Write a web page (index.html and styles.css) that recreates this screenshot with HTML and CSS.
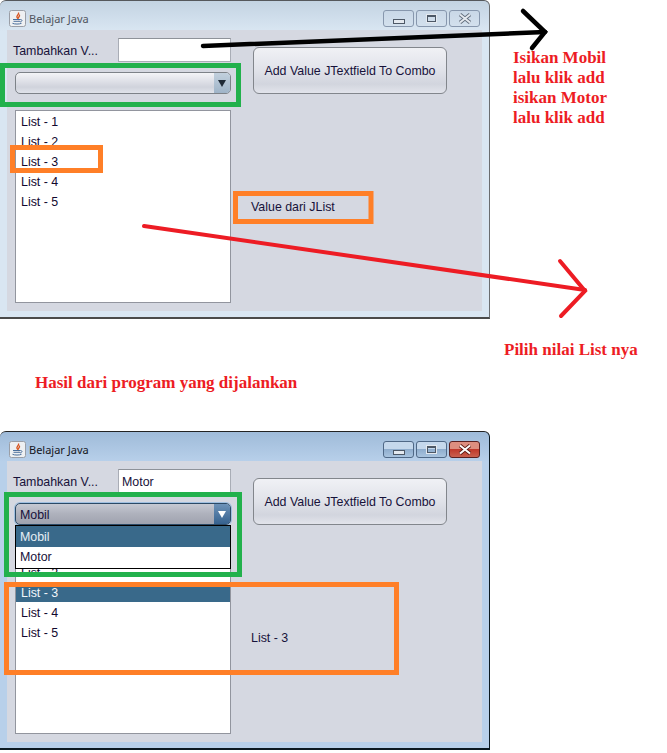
FILE: index.html
```html
<!DOCTYPE html>
<html lang="en">
<head>
    <meta charset="UTF-8">
    <meta name="viewport" content="width=device-width, initial-scale=1.0">
    <title>Belajar Java</title>
    <link rel="stylesheet" href="styles.css">
</head>
<body>
    <div id="canvas">
        <!-- first window: before running -->
        <div class="window inactive">
            <div class="title-bar">
                <svg class="java-icon" width="17" height="17" viewBox="0 0 17 17">
                    <rect x="0.5" y="0.5" width="16" height="16" rx="2" fill="#eef0f2" stroke="#9a9ea6"/>
                    <path d="M9.5 2.5c1 2-2.5 3-1.5 5 .3.6.8 1 1 1.2-.2-1.2 2.400-2.200 1.400-4.200" fill="none" stroke="#d8541e" stroke-width="1.300"/>
                    <path d="M4 9.500h7.500M4.500 11.300h6.500M3.500 13.300c2 1 7 1 9 0" fill="none" stroke="#4a6f9c" stroke-width="1"/>
                    <path d="M11.500 9.500c2 0 2 2-.5 2.500" fill="none" stroke="#4a6f9c" stroke-width="1"/>
                </svg>
                <span class="title-text">Belajar Java</span>
                <div class="win-buttons">
                    <div class="win-btn"><span class="glyph-min"></span></div>
                    <div class="win-btn"><span class="glyph-max"></span></div>
                    <div class="win-btn close">
                        <svg class="glyph-close" width="16" height="11" viewBox="0 0 16 11">
                            <path d="M3 1.500L13 9.500M13 1.500L3 9.500" stroke="#5f6b7a" stroke-width="3.600"/>
                            <path d="M3 1.500L13 9.500M13 1.500L3 9.500" stroke="#e4e9ef" stroke-width="2"/>
                        </svg>
                    </div>
                </div>
            </div>
            <div class="panel">
                <div class="left-col">
                    <div class="field-row">
                        <span class="field-label">Tambahkan V...</span>
                        <div class="text-field"></div>
                    </div>
                    <div class="combo">
                        <span class="combo-value"></span>
                        <span class="combo-arrow"><span class="arrow-down"></span></span>
                    </div>
                    <div class="list">
                        <div class="list-item">List - 1</div>
                        <div class="list-item">List - 2</div>
                        <div class="list-item">List - 3</div>
                        <div class="list-item">List - 4</div>
                        <div class="list-item">List - 5</div>
                    </div>
                </div>
                <div class="right-col">
                    <button class="add-btn">Add Value JTextfield To Combo</button>
                    <div class="value-label">Value dari JList</div>
                </div>
            </div>
        </div>

        <!-- second window: result -->
        <div class="window active">
            <div class="title-bar">
                <svg class="java-icon" width="17" height="17" viewBox="0 0 17 17">
                    <rect x="0.5" y="0.5" width="16" height="16" rx="2" fill="#eef0f2" stroke="#9a9ea6"/>
                    <path d="M9.5 2.5c1 2-2.5 3-1.5 5 .3.6.8 1 1 1.2-.2-1.2 2.400-2.200 1.400-4.200" fill="none" stroke="#d8541e" stroke-width="1.300"/>
                    <path d="M4 9.500h7.500M4.500 11.300h6.500M3.500 13.300c2 1 7 1 9 0" fill="none" stroke="#4a6f9c" stroke-width="1"/>
                    <path d="M11.500 9.500c2 0 2 2-.5 2.500" fill="none" stroke="#4a6f9c" stroke-width="1"/>
                </svg>
                <span class="title-text">Belajar Java</span>
                <div class="win-buttons">
                    <div class="win-btn"><span class="glyph-min"></span></div>
                    <div class="win-btn"><span class="glyph-max"></span></div>
                    <div class="win-btn close">
                        <svg class="glyph-close" width="16" height="11" viewBox="0 0 16 11">
                            <path d="M3 1.500L13 9.500M13 1.500L3 9.500" stroke="#5a1a14" stroke-width="3.600"/>
                            <path d="M3 1.500L13 9.500M13 1.500L3 9.500" stroke="#fff" stroke-width="2"/>
                        </svg>
                    </div>
                </div>
            </div>
            <div class="panel">
                <div class="left-col">
                    <div class="field-row">
                        <span class="field-label">Tambahkan V...</span>
                        <div class="text-field">Motor</div>
                    </div>
                    <div class="combo open">
                        <span class="combo-value">Mobil</span>
                        <span class="combo-arrow"><span class="arrow-down"></span></span>
                        <div class="combo-popup">
                            <div class="popup-item selected">Mobil</div>
                            <div class="popup-item">Motor</div>
                        </div>
                    </div>
                    <div class="list">
                        <div class="list-item">List - 1</div>
                        <div class="list-item">List - 2</div>
                        <div class="list-item selected">List - 3</div>
                        <div class="list-item">List - 4</div>
                        <div class="list-item">List - 5</div>
                    </div>
                </div>
                <div class="right-col">
                    <button class="add-btn">Add Value JTextfield To Combo</button>
                    <div class="value-label">List - 3</div>
                </div>
            </div>
        </div>

        <!-- hand drawn notes on top of the screenshots -->
        <svg id="marks" width="667" height="753" viewBox="0 0 667 753">
            <g fill="none" stroke="#22b14c" stroke-width="5">
                <rect x="2.500" y="65.500" width="236" height="39"/>
                <rect x="6.500" y="494.500" width="233" height="80"/>
            </g>
            <g fill="none" stroke="#ff7f27" stroke-width="5">
                <rect x="12.500" y="147.500" width="88" height="23"/>
                <rect x="235.500" y="193.500" width="135.500" height="28"/>
                <rect x="6.500" y="584.500" width="390" height="88"/>
            </g>
            <g fill="none" stroke="#000" stroke-width="4.500" stroke-linecap="round">
                <path d="M203 46L545 32"/>
                <path d="M523 11L545 32L532 48"/>
            </g>
            <g fill="none" stroke="#ed1c24" stroke-width="4" stroke-linecap="round">
                <path d="M144 226L585 290"/>
                <path d="M560 261L585 291L561 316"/>
            </g>
        </svg>
        <div class="note note-steps">Isikan Mobil<br>lalu klik add<br>isikan Motor<br>lalu klik add</div>
        <div class="note note-pick">Pilih nilai List nya</div>
        <div class="note note-result">Hasil dari program yang dijalankan</div>
    </div>
</body>
</html>
```

FILE: styles.css
```css
body, html {
    margin: 0;
    padding: 0;
    background-color: #fff;
    font-family: "Liberation Sans", Arial, sans-serif;
    font-size: 12.400px;
    color: #17123a;
}
#canvas {
    width: 667px;
    height: 753px;
    position: relative;
    overflow: hidden;
}
.window {
    width: 490px;
    height: 319px;
    box-sizing: border-box;
    border-radius: 6px 6px 0 0;
    border-top: 1px solid #55585c;
    border-right: 1px solid #6a6d70;
    border-bottom: 2px solid #4a4a4a;
    display: flex;
    flex-direction: column;
}
.window.inactive {
    background: linear-gradient(#c3d3e2, #d9e6f2 30px);
}
.window.active {
    margin-top: 112px;
    background: linear-gradient(#9fbbd9, #b8d0ea 30px);
    border-top-color: #222;
    border-right-color: #0c1a22;
    border-bottom-color: #0c1a22;
}
.title-bar {
    height: 29px;
    box-sizing: border-box;
    display: flex;
    align-items: center;
    padding: 6px 9px 0;
    flex-shrink: 0;
}
.java-icon {
    margin-right: 3px;
}
.title-text {
    font-family: "Noto Sans", sans-serif;
    font-size: 11px;
    color: #50555e;
}
.active .title-text {
    color: #14161c;
}
.win-buttons {
    margin-left: auto;
    display: flex;
    gap: 2px;
}
.win-btn {
    width: 31px;
    height: 17px;
    box-sizing: border-box;
    border: 1px solid #8797ad;
    border-radius: 3px;
    display: flex;
    align-items: center;
    justify-content: center;
    background: linear-gradient(#c9d8e7, #d3e0ed);
}
.active .win-btn {
    border-color: #4f6886;
    background: linear-gradient(#c5d8ec 45%, #8fadcd 50%, #a9c4df);
}
.active .win-btn.close {
    border-color: #5a2020;
    background: linear-gradient(#dd8e7f 45%, #c0392b 50%, #c9604f);
}
.glyph-min {
    width: 10px;
    height: 3px;
    margin-top: 5px;
    background-color: #e4e9ef;
    border: 1px solid #4d5866;
}
.glyph-max {
    width: 7px;
    height: 4px;
    border: 1px solid #4d5866;
    border-width: 2px 1px 1px;
    outline: 1px solid #e4e9ef;
}
.panel {
    margin: 0 7px 6px;
    flex: 1;
    background-color: #d5d8e1;
    padding: 8px 0 0 8px;
    display: flex;
}
.left-col {
    width: 216px;
    display: flex;
    flex-direction: column;
}
.field-row {
    display: flex;
    align-items: center;
    height: 24px;
    margin-left: -2px;
    margin-bottom: 10px;
}
.field-label {
    width: 105px;
    padding-top: 1px;
}
.text-field {
    width: 113px;
    height: 24px;
    line-height: 24px;
    box-sizing: border-box;
    padding-left: 3px;
    background-color: #fff;
    border: 1px solid #a9adb6;
    border-top-color: #8e9299;
}
.combo {
    height: 22px;
    box-sizing: border-box;
    position: relative;
    display: flex;
    align-items: center;
    border: 1px solid #7d8288;
    border-radius: 5px;
    margin-bottom: 16px;
    background: linear-gradient(#f3f4f7, #dfe1e8 40%, #d0d3dc 70%, #e0e3ea);
}
.combo.open {
    border-color: #2c4a66;
    box-shadow: 0 0 0 1px #9fbfe0;
    background: linear-gradient(#c7cad3, #aeb1bc 50%, #9fa3af);
}
.combo-value {
    flex: 1;
    padding: 1px 0 0 4px;
}
.combo-arrow {
    width: 16px;
    height: 100%;
    display: flex;
    align-items: center;
    justify-content: center;
    border-radius: 0 4px 4px 0;
    background: linear-gradient(#c2d0dd, #9fb4c8);
}
.combo.open .combo-arrow {
    background: linear-gradient(#6d92b8, #36628f);
}
.arrow-down {
    width: 0;
    height: 0;
    border-left: 4px solid transparent;
    border-right: 4px solid transparent;
    border-top: 7px solid #1f2a36;
}
.combo.open .arrow-down {
    border-top-color: #fff;
}
.combo-popup {
    position: absolute;
    top: 21px;
    left: -1px;
    width: 216px;
    height: 44px;
    box-sizing: border-box;
    background-color: #fff;
    border: 1px solid #000;
    z-index: 5;
}
.popup-item {
    height: 21px;
    line-height: 20px;
    padding-left: 4px;
}
.popup-item.selected {
    line-height: 22px;
    background-color: #39698a;
    color: #e6eef5;
}
.list {
    height: 193px;
    box-sizing: border-box;
    background-color: #fff;
    border: 1px solid #92959e;
    color: #12082e;
}
.list-item {
    height: 20px;
    line-height: 22px;
    padding-left: 5px;
}
.list-item.selected {
    background-color: #39698a;
    color: #f2f6fa;
}
.right-col {
    margin-left: 22px;
    padding-top: 9px;
}
.add-btn {
    display: block;
    width: 194px;
    height: 47px;
    padding: 0;
    font: inherit;
    color: inherit;
    border: 1px solid #82868c;
    border-radius: 6px;
    background: linear-gradient(#f0f1f5, #e0e2e9 50%, #d2d5de 80%, #e2e4eb);
}
.value-label {
    margin: 106px 0 0 -2px;
    height: 14px;
    line-height: 14px;
}
#marks {
    position: absolute;
    top: 0;
    left: 0;
    z-index: 10;
}
.note {
    position: absolute;
    z-index: 11;
    font-family: "Liberation Serif", serif;
    font-weight: bold;
    font-size: 17px;
    line-height: 20px;
    color: #ed1c24;
    white-space: nowrap;
}
.note-steps {
    left: 513px;
    top: 48px;
}
.note-pick {
    left: 504px;
    top: 340px;
}
.note-result {
    left: 35px;
    top: 373px;
}
```
